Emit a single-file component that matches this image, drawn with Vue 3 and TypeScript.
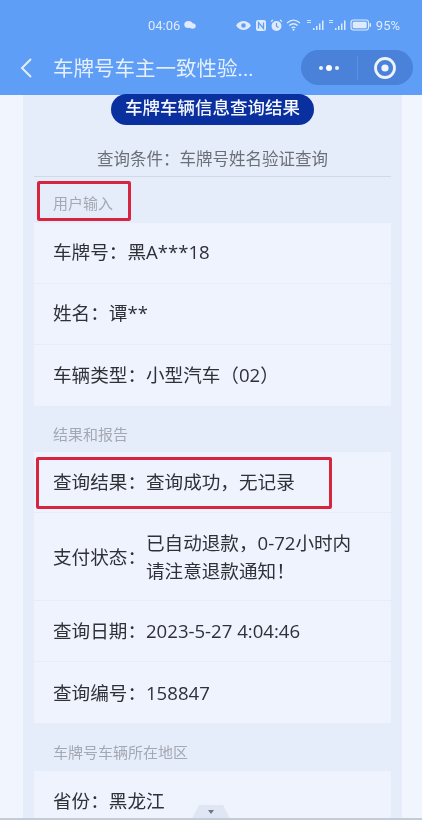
<script setup lang="ts">
interface Row { label: string; lines: string[]; hl?: boolean }
interface Section { title: string; mark?: boolean; rows: Row[] }
const sections: Section[] = [
  { title: '用户输入', mark: true, rows: [
    { label: '车牌号：', lines: ['黑A***18'] },
    { label: '姓名：', lines: ['谭**'] },
    { label: '车辆类型：', lines: ['小型汽车（02）'] },
  ] },
  { title: '结果和报告', rows: [
    { label: '查询结果：', lines: ['查询成功，无记录'], hl: true },
    { label: '支付状态：', lines: ['已自动退款，0-72小时内', '请注意退款通知！'] },
    { label: '查询日期：', lines: ['2023-5-27 4:04:46'] },
    { label: '查询编号：', lines: ['158847'] },
  ] },
  { title: '车牌号车辆所在地区', rows: [
    { label: '省份：', lines: ['黑龙江'] },
  ] },
]
</script>

<template>
  <div class="screen">
    <header class="head">
      <div class="status">
        <div class="time">
          <span>04:06</span>
          <svg width="12" height="10" viewBox="0 0 12 10"><ellipse cx="4.5" cy="4.5" rx="4.2" ry="3.6" fill="#dfeafc"/><ellipse cx="8.5" cy="6" rx="3.2" ry="2.8" fill="#dfeafc"/></svg>
        </div>
        <div class="sys">
          <svg width="17" height="11" viewBox="0 0 17 11"><path d="M1 5.5C3.5 2 6 1 8.5 1s5 1 7.500 4.500C13.500 9 11 10 8.500 10S3.500 9 1 5.500Z" fill="#dfeafc"/><circle cx="8.500" cy="5.500" r="2.300" fill="#5d9df5"/></svg>
          <svg width="12" height="13" viewBox="0 0 12 13"><rect x="1" y="1" width="10" height="11" rx="2" fill="#dfeafc"/><path d="M3.500 9.500V3.500l5 6V3.500" stroke="#5d9df5" stroke-width="1.300" fill="none"/></svg>
          <svg width="13" height="13" viewBox="0 0 13 13"><circle cx="6.500" cy="7" r="5" fill="#dfeafc"/><path d="M1 2.500 3 1M12 2.500 10 1" stroke="#dfeafc" stroke-width="1.300"/><path d="M6.500 4v3.200l2 1.300" stroke="#5d9df5" stroke-width="1.200" fill="none"/></svg>
          <svg width="17" height="12" viewBox="0 0 17 12"><path d="M1 4c4-3.500 9-3.500 13 0M3.300 6.500c2.700-2.300 5.700-2.300 8.400 0M5.600 9c1.300-1.100 2.500-1.100 3.800 0" stroke="#dfeafc" stroke-width="1.300" fill="none"/><circle cx="7.500" cy="10.800" r="1" fill="#dfeafc"/></svg>
          <svg width="19" height="12" viewBox="0 0 19 12"><path d="M1 1.500h4M1 3.500h4" stroke="#dfeafc" stroke-width=".9"/><path d="M7 11V9h1.500v2zM10 11V7h1.500v4zM13 11V4.500h1.500V11zM16 11V1.500h1.500V11z" fill="#dfeafc"/></svg>
          <svg width="19" height="12" viewBox="0 0 19 12"><path d="M1 1.500h4M1 3.500h4" stroke="#dfeafc" stroke-width=".9"/><path d="M7 11V9h1.500v2zM10 11V7h1.500v4zM13 11V4.500h1.500V11zM16 11V1.500h1.500V11z" fill="#dfeafc"/></svg>
          <svg width="22" height="12" viewBox="0 0 22 12"><rect x="1" y="1" width="17.500" height="10" rx="2.500" fill="none" stroke="#dfeafc" stroke-width="1.100"/><rect x="2.700" y="2.700" width="14" height="6.600" rx="1.200" fill="#dfeafc"/><rect x="19.500" y="4" width="1.500" height="4" rx=".7" fill="#dfeafc"/></svg>
          <span class="pct">95%</span>
        </div>
      </div>
      <div class="nav">
        <svg class="back" width="14" height="22" viewBox="0 0 14 22"><path d="M12 2 3 11l9 9" stroke="#e4eefd" stroke-width="2" fill="none"/></svg>
        <div class="title">车牌号车主一致性验...</div>
        <div class="capsule">
          <div class="cap-cell">
            <svg width="24" height="8" viewBox="0 0 24 8"><circle cx="4" cy="4" r="2" fill="#eaf2fe"/><circle cx="12" cy="4" r="3" fill="#fff"/><circle cx="20" cy="4" r="2" fill="#eaf2fe"/></svg>
          </div>
          <div class="cap-line"></div>
          <div class="cap-cell">
            <svg width="24" height="24" viewBox="0 0 24 24"><circle cx="12" cy="12" r="9.500" stroke="#eef4fe" stroke-width="2.800" fill="none"/><circle cx="12" cy="12" r="3.600" fill="#eef4fe"/></svg>
          </div>
        </div>
      </div>
    </header>

    <main class="panel">
      <div class="pill">车牌车辆信息查询结果</div>
      <div class="cond">查询条件：车牌号姓名验证查询</div>
      <section v-for="s in sections" :key="s.title" class="sec">
        <div class="sec-title">
          <span v-if="s.mark" class="mark"></span>
          {{ s.title }}
        </div>
        <div class="card">
          <div v-for="r in s.rows" :key="r.label" class="row">
            <span v-if="r.hl" class="hl"></span>
            <span class="lab">{{ r.label }}</span>
            <div class="val">
              <div v-for="l in r.lines" :key="l">{{ l }}</div>
            </div>
          </div>
        </div>
      </section>
    </main>

    <div class="tab"><span class="tri"></span></div>
  </div>
</template>

<style>
html, body { margin: 0; background: #f1f6fe; overflow: hidden; }
</style>

<style scoped>
.screen {
  width: 422px;
  height: 820px;
  position: relative;
  overflow: hidden;
  background: #f1f6fe;
  font-family: Roboto, "Noto Sans CJK SC", "Liberation Sans", sans-serif;
  color: #2e3136;
  filter: blur(0.35px);
}
.head {
  height: 95px;
  background: #5e9ef6;
  display: flex;
  flex-direction: column;
  position: relative;
  z-index: 1;
}
.status {
  display: flex;
  justify-content: space-between;
  align-items: center;
  padding: 16px 22px 0 148px;
  height: 18px;
  color: #dfeafc;
  font-size: 13px;
}
.time { display: flex; align-items: center; gap: 4px; }
.sys { display: flex; align-items: center; gap: 3px; }
.pct { margin-left: 1px; }
.nav {
  display: flex;
  align-items: center;
  padding: 16px 9px 0 19px;
}
.back { flex: none; }
.title {
  flex: 1;
  margin-left: 20px;
  font-size: 20.500px;
  color: #e6effd;
  white-space: nowrap;
  position: relative;
  top: -1px;
}
.capsule {
  flex: none;
  width: 112px;
  height: 35px;
  border-radius: 18px;
  background: #4a82d9;
  display: flex;
  align-items: center;
}
.cap-cell { flex: 1; display: flex; justify-content: center; align-items: center; }
.cap-line { width: 1px; height: 24px; background: #5b92e3; }
.panel {
  width: 379px;
  margin-left: 23px;
  background: #e6edfa;
  padding-bottom: 20px;
  box-sizing: border-box;
  height: 725px;
}
.pill {
  position: relative;
  z-index: 2;
  width: 203px;
  height: 31px;
  margin: -1px auto 0;
  border-radius: 16px;
  background: #0a2f9f;
  color: #f4f7ff;
  font-size: 17.500px;
  font-weight: 500;
  line-height: 29px;
  text-align: center;
}
.cond {
  margin: 18px 11px 0;
  height: 33px;
  line-height: 33px;
  font-size: 16.500px;
  color: #6b6f77;
  text-align: center;
  border-bottom: 1px solid #d3d9e4;
}
.sec-title {
  position: relative;
  height: 46px;
  padding: 14px 0 0 30px;
  box-sizing: border-box;
  font-size: 15px;
  line-height: 30px;
  color: #a3a8b2;
}
.sec:first-of-type .sec-title { padding-top: 12px; }
.sec:last-of-type .sec-title { height: 48px; padding-top: 15px; }
.mark {
  position: absolute;
  left: 14px;
  top: 4px;
  width: 94px;
  height: 40px;
  box-sizing: border-box;
  border: 3px solid #d8253f;
  border-radius: 2px;
}
.card {
  margin: 0 11px;
  background: #eef3fe;
}
.row {
  position: relative;
  display: flex;
  align-items: center;
  min-height: 61px;
  padding: 0 19px 2px;
  font-family: "Open Sans", "Noto Sans CJK SC", sans-serif;
  font-size: 18.600px;
  line-height: 28px;
  border-bottom: 1px solid #e6edfa;
  box-sizing: border-box;
}
.sec:nth-of-type(2) .row { padding-bottom: 0; }
.row:last-child { border-bottom: none; }
.row:has(.val div + div) { min-height: 88px; }
.lab { flex: none; white-space: nowrap; }
.val { white-space: nowrap; }
.hl {
  position: absolute;
  left: 2px;
  top: 5px;
  width: 296px;
  height: 52px;
  box-sizing: border-box;
  border: 3px solid #d8253f;
  border-radius: 2px;
}
.tab {
  position: absolute;
  left: 192px;
  bottom: 1px;
  width: 38px;
  height: 14px;
  background: #e0e6f3;
  clip-path: polygon(18% 0, 82% 0, 100% 100%, 0 100%);
  display: flex;
  justify-content: center;
  align-items: center;
}
.tri {
  width: 0;
  height: 0;
  border-left: 3.500px solid transparent;
  border-right: 3.500px solid transparent;
  border-top: 4px solid #6f7785;
}
.screen::after {
  content: "";
  position: absolute;
  left: 0;
  right: 0;
  bottom: 0;
  height: 2px;
  background: #c5ccd6;
}
</style>
